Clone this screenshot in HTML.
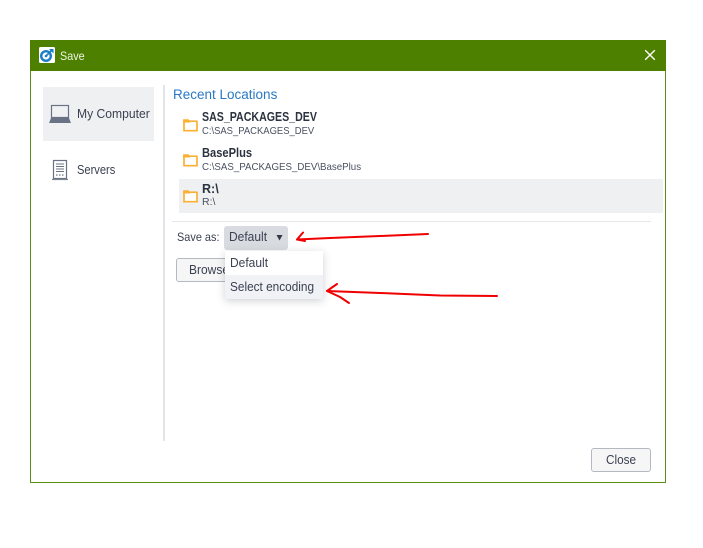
<!DOCTYPE html>
<html>
<head>
<meta charset="utf-8">
<style>
html,body{margin:0;padding:0;background:#fff;}
body{width:703px;height:548px;position:relative;overflow:hidden;font-family:"Liberation Sans",sans-serif;color:#3a4150;font-size:12px;}
.a{position:absolute;white-space:nowrap;line-height:14px;transform-origin:0 50%;}
.b{position:absolute;box-sizing:border-box;}
.t{font-weight:bold;font-size:12.5px;color:#2c3340;}
.s{font-size:10.5px;color:#4a5160;}
</style>
</head>
<body>
<div class="b" style="left:30px;top:40px;width:636px;height:443px;border:1px solid #5b9015;background:#fff;"></div>
<div class="b" style="left:30px;top:40px;width:636px;height:31px;background:#4e8000;"></div>
<svg class="b" style="left:39px;top:47px;" width="16" height="16" viewBox="0 0 16 16">
<rect width="16" height="16" rx="1.5" fill="#fff"/>
<circle cx="7" cy="9" r="4.8" fill="none" stroke="#1a7fc4" stroke-width="2.4"/>
<circle cx="7" cy="9" r="1.3" fill="#1a7fc4"/>
<path d="M7.5 8.5L12.5 3.5" fill="none" stroke="#1a7fc4" stroke-width="1.6"/>
<path d="M10 2h4.5v4.5z" fill="#1a7fc4"/>
</svg>
<div class="a" style="left:60px;top:49px;color:#eef4e4;font-size:12px;transform:scaleX(.9);">Save</div>
<svg class="b" style="left:644px;top:49px;" width="12" height="12" viewBox="0 0 12 12"><path d="M1.2 1.2L10.8 10.8M10.8 1.2L1.2 10.8" stroke="#fff" stroke-width="1.4" fill="none"/></svg>

<div class="b" style="left:43px;top:87px;width:111px;height:54px;background:#eff0f2;"></div>
<svg class="b" style="left:49px;top:104px;" width="23" height="20" viewBox="0 0 23 20">
<rect x="2.5" y="1.5" width="17" height="12" fill="#f0f1f3" stroke="#6a7385" stroke-width="1.2"/>
<path d="M2 14h18l2 5H0z" fill="#6a7385"/>
</svg>
<div class="a" style="left:77px;top:107px;font-size:12.5px;transform:scaleX(.97);">My Computer</div>
<svg class="b" style="left:51px;top:159px;" width="18" height="22" viewBox="0 0 18 22">
<rect x="2.5" y="1.5" width="13" height="18" fill="#fff" stroke="#6a7385" stroke-width="1.2"/>
<path d="M5 5h8M5 7.5h8M5 10h8M5 12.5h8" stroke="#6a7385" stroke-width="1"/>
<path d="M5 16h1.5M8 16h1.5M11 16h1.5" stroke="#6a7385" stroke-width="1.2"/>
<path d="M1 20.5h16" stroke="#7c8594" stroke-width="1.2"/>
</svg>
<div class="a" style="left:77px;top:163px;font-size:12.5px;transform:scaleX(.89);">Servers</div>
<div class="b" style="left:163px;top:85px;width:2px;height:356px;background:#e3e5e8;"></div>

<div class="a" style="left:173px;top:88px;font-size:13.5px;color:#2a78c4;">Recent Locations</div>

<div class="b" style="left:179px;top:179px;width:484px;height:34px;background:#eff0f2;"></div>

<svg class="b" style="left:183px;top:118px;" width="15" height="14" viewBox="0 0 15 14"><path d="M1 3.2h12.4a.6.6 0 0 1 .6.6v8.9H1z" fill="#fff" stroke="#fbb034" stroke-width="1.7"/><path d="M.2 4.5V1.2h5.4L7.4 4.5z" fill="#fbb034"/></svg>
<div class="a t" style="left:202px;top:110px;transform:scaleX(.85);">SAS_PACKAGES_DEV</div>
<div class="a s" style="left:202px;top:124px;transform:scaleX(.9);">C:\SAS_PACKAGES_DEV</div>

<svg class="b" style="left:183px;top:153px;" width="15" height="14" viewBox="0 0 15 14"><path d="M1 3.2h12.4a.6.6 0 0 1 .6.6v8.9H1z" fill="#fff" stroke="#fbb034" stroke-width="1.7"/><path d="M.2 4.5V1.2h5.4L7.4 4.5z" fill="#fbb034"/></svg>
<div class="a t" style="left:202px;top:146px;transform:scaleX(.89);">BasePlus</div>
<div class="a s" style="left:202px;top:160px;transform:scaleX(.925);">C:\SAS_PACKAGES_DEV\BasePlus</div>

<svg class="b" style="left:183px;top:189px;" width="15" height="14" viewBox="0 0 15 14"><path d="M1 3.2h12.4a.6.6 0 0 1 .6.6v8.9H1z" fill="#fff" stroke="#fbb034" stroke-width="1.7"/><path d="M.2 4.5V1.2h5.4L7.4 4.5z" fill="#fbb034"/></svg>
<div class="a t" style="left:202px;top:182px;">R:\</div>
<div class="a s" style="left:202px;top:195px;">R:\</div>

<div class="b" style="left:172px;top:221px;width:479px;height:1px;background:#e6e7ea;"></div>

<div class="a" style="left:177px;top:230px;font-size:12px;transform:scaleX(.91);">Save as:</div>
<div class="b" style="left:224px;top:226px;width:64px;height:24px;background:#d8dbe0;border-radius:3px;"></div>
<div class="a" style="left:229px;top:230px;font-size:12.5px;transform:scaleX(.96);">Default</div>
<svg class="b" style="left:276px;top:234px;" width="7" height="7" viewBox="0 0 7 7"><path d="M0.5 1h6L3.5 6.5z" fill="#333a47"/></svg>

<div class="b" style="left:176px;top:258px;width:60px;height:24px;background:#f6f6f7;border:1px solid #b4b8c0;border-radius:3px;"></div>
<div class="a" style="left:189px;top:263px;font-size:12.5px;transform:scaleX(.96);">Browse</div>

<div class="b" style="left:225px;top:251px;width:98px;height:48px;background:#fff;box-shadow:0 2px 8px rgba(40,50,70,.22);"></div>
<div class="b" style="left:225px;top:275px;width:98px;height:24px;background:#f0f2f5;"></div>
<div class="a" style="left:230px;top:256px;font-size:12.5px;transform:scaleX(.96);">Default</div>
<div class="a" style="left:230px;top:280px;font-size:12.5px;transform:scaleX(.945);">Select encoding</div>

<div class="b" style="left:591px;top:448px;width:60px;height:24px;background:#f6f6f7;border:1px solid #b4b8c0;border-radius:3px;"></div>
<div class="a" style="left:606px;top:453px;font-size:12.5px;transform:scaleX(.94);">Close</div>

<svg class="b" style="left:0;top:0;" width="703" height="548" viewBox="0 0 703 548" fill="none" stroke="#f00000" stroke-width="2" stroke-linecap="round" stroke-linejoin="round">
<path d="M428 234L380 236L330 238L297 239.5L303 232.5"/>
<path d="M297 239.5L305 241"/>
<path d="M497 296L440 295.5L380 293L327 291L337 284"/>
<path d="M327 291L340 297L349 303"/>
</svg>
</body>
</html>
